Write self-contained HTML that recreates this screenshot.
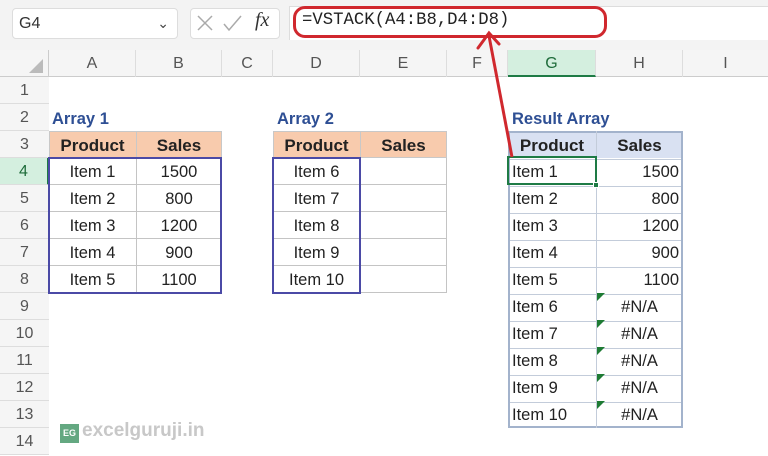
<!DOCTYPE html>
<html><head><meta charset="utf-8"><style>
*{margin:0;padding:0;box-sizing:border-box}
body{width:768px;height:452px;overflow:hidden;background:#fff;font-family:"Liberation Sans",Calibri,sans-serif;position:relative;color:#222}
.a{position:absolute}
.rh{position:absolute;left:0;width:49px;height:27px;line-height:28px;text-align:center;font-size:16px;color:#555;background:#f5f5f5;border-bottom:1px solid #ddd}
.ch{position:absolute;top:50px;height:27px;line-height:27px;text-align:center;font-size:16px;color:#555;border-right:1px solid #ddd}
.c{position:absolute;height:27px;line-height:29px;font-size:16.5px;text-align:center;color:#222}
.h{font-weight:bold;font-size:17px}
.t{position:absolute;font-weight:bold;color:#2e4f94;font-size:16.5px}
.tri{position:absolute;width:0;height:0;border-top:8px solid #1e7b34;border-right:8px solid transparent}
</style></head><body>
<div class="a" style="left:0;top:0;width:768px;height:50px;background:#f3f3f3"></div>
<div class="a" style="left:12px;top:8px;width:166px;height:31px;background:#fff;border:1px solid #ddd;border-radius:4px;font-size:16px;line-height:29px;padding-left:6px;color:#333">G4<span style="position:absolute;right:8px;top:0;font-size:14px;color:#444">&#8964;</span></div>
<div class="a" style="left:190px;top:8px;width:90px;height:31px;background:#fff;border:1px solid #ddd;border-radius:4px"></div>
<svg class="a" style="left:196px;top:14px" width="50" height="20"><path d="M2 2L16 16M16 2L2 16" stroke="#aaa" stroke-width="1.5"/><path d="M28 10l5 6 12-14" stroke="#aaa" stroke-width="1.5" fill="none"/></svg>
<div class="a" style="left:255px;top:9px;font-family:'Liberation Serif',serif;font-style:italic;font-size:20px;color:#333">fx</div>
<div class="a" style="left:289px;top:6px;width:479px;height:34px;background:#fff;border-top:1px solid #ddd;border-left:1px solid #ddd"></div>
<div class="a" style="left:293px;top:6px;width:314px;height:32px;border:3px solid #d0282e;border-radius:12px"></div>
<div class="a" style="left:302px;top:11px;font-family:'Liberation Mono',monospace;font-size:17.3px;color:#222">=VSTACK(A4:B8,D4:D8)</div>
<div class="a" style="left:0;top:50px;width:768px;height:27px;background:#f5f5f5;border-bottom:1px solid #ccc"></div>
<div class="a" style="left:0;top:50px;width:49px;height:27px;border-right:1px solid #ccc"></div>
<svg class="a" style="left:28px;top:58px" width="16" height="16"><path d="M15 1V15H1Z" fill="#bbb"/></svg>
<div class="ch" style="left:49px;width:87px">A</div>
<div class="ch" style="left:136px;width:86px">B</div>
<div class="ch" style="left:222px;width:51px">C</div>
<div class="ch" style="left:273px;width:87px">D</div>
<div class="ch" style="left:360px;width:87px">E</div>
<div class="ch" style="left:447px;width:61px">F</div>
<div class="ch" style="left:508px;width:88px;background:#d4efdf;color:#1e6b3a;border-bottom:2px solid #1e7b45;height:27px">G</div>
<div class="ch" style="left:596px;width:87px">H</div>
<div class="ch" style="left:683px;width:85px;border:none">I</div>
<div class="a" style="left:48px;top:77px;width:1px;height:375px;background:#ccc"></div>
<div class="rh" style="top:77px">1</div><div class="rh" style="top:104px">2</div><div class="rh" style="top:131px">3</div>
<div class="rh" style="top:158px;background:#d4efdf;color:#1e6b3a;border-right:2px solid #1e7b45">4</div>
<div class="rh" style="top:185px">5</div><div class="rh" style="top:212px">6</div><div class="rh" style="top:239px">7</div><div class="rh" style="top:266px">8</div><div class="rh" style="top:293px">9</div><div class="rh" style="top:320px">10</div><div class="rh" style="top:347px">11</div><div class="rh" style="top:374px">12</div><div class="rh" style="top:401px">13</div><div class="rh" style="top:428px">14</div>
<div class="t" style="left:52px;top:110px">Array 1</div>
<div class="t" style="left:277px;top:110px">Array 2</div>
<div class="t" style="left:512px;top:110px">Result Array</div>
<div class="a" style="left:49px;top:131px;width:173px;height:27px;background:#f8cbad;border:1px solid #c8c8c8"></div>
<div class="a" style="left:136px;top:131px;width:1px;height:27px;background:#c8c8c8"></div>
<div class="a" style="left:49px;top:158px;width:173px;height:135px;background:repeating-linear-gradient(to bottom,transparent 0,transparent 26px,#c4c4c4 26px,#c4c4c4 27px)"></div>
<div class="a" style="left:136px;top:158px;width:1px;height:135px;background:#c4c4c4"></div>
<div class="a" style="left:48px;top:157px;width:174px;height:137px;border:2px solid #4b4aa6"></div>
<div class="c h" style="left:49px;top:131px;width:87px">Product</div><div class="c h" style="left:136px;top:131px;width:86px">Sales</div>
<div class="c" style="left:49px;top:158px;width:87px">Item 1</div><div class="c" style="left:136px;top:158px;width:86px">1500</div>
<div class="c" style="left:49px;top:185px;width:87px">Item 2</div><div class="c" style="left:136px;top:185px;width:86px">800</div>
<div class="c" style="left:49px;top:212px;width:87px">Item 3</div><div class="c" style="left:136px;top:212px;width:86px">1200</div>
<div class="c" style="left:49px;top:239px;width:87px">Item 4</div><div class="c" style="left:136px;top:239px;width:86px">900</div>
<div class="c" style="left:49px;top:266px;width:87px">Item 5</div><div class="c" style="left:136px;top:266px;width:86px">1100</div>
<div class="a" style="left:273px;top:131px;width:174px;height:27px;background:#f8cbad;border:1px solid #c8c8c8"></div>
<div class="a" style="left:360px;top:131px;width:1px;height:27px;background:#c8c8c8"></div>
<div class="a" style="left:273px;top:158px;width:174px;height:135px;border-right:1px solid #c4c4c4;border-bottom:1px solid #c4c4c4;background:repeating-linear-gradient(to bottom,transparent 0,transparent 26px,#c4c4c4 26px,#c4c4c4 27px)"></div>
<div class="a" style="left:272px;top:157px;width:89px;height:137px;border:2px solid #4b4aa6"></div>
<div class="c h" style="left:273px;top:131px;width:87px">Product</div><div class="c h" style="left:360px;top:131px;width:87px">Sales</div>
<div class="c" style="left:273px;top:158px;width:87px">Item 6</div>
<div class="c" style="left:273px;top:185px;width:87px">Item 7</div>
<div class="c" style="left:273px;top:212px;width:87px">Item 8</div>
<div class="c" style="left:273px;top:239px;width:87px">Item 9</div>
<div class="c" style="left:273px;top:266px;width:87px">Item 10</div>
<div class="a" style="left:508px;top:131px;width:175px;height:27px;background:#d9e1f2"></div>
<div class="a" style="left:508px;top:131px;width:175px;height:297px;border:2px solid #a3b3cc;background:repeating-linear-gradient(to bottom,transparent 0,transparent 26px,#c3ccda 26px,#c3ccda 27px)"></div>
<div class="a" style="left:596px;top:131px;width:1px;height:297px;background:#c3ccda"></div>
<div class="a" style="left:507px;top:156px;width:90px;height:29px;border:2px solid #1e7b45"></div>
<div class="a" style="left:593px;top:182px;width:6px;height:6px;background:#1e7b45;border:1px solid #fff"></div>
<div class="c h" style="left:508px;top:131px;width:88px">Product</div><div class="c h" style="left:596px;top:131px;width:87px">Sales</div>
<div class="c" style="left:512px;top:158px;text-align:left">Item 1</div><div class="c" style="left:596px;top:158px;width:83px;text-align:right">1500</div>
<div class="c" style="left:512px;top:185px;text-align:left">Item 2</div><div class="c" style="left:596px;top:185px;width:83px;text-align:right">800</div>
<div class="c" style="left:512px;top:212px;text-align:left">Item 3</div><div class="c" style="left:596px;top:212px;width:83px;text-align:right">1200</div>
<div class="c" style="left:512px;top:239px;text-align:left">Item 4</div><div class="c" style="left:596px;top:239px;width:83px;text-align:right">900</div>
<div class="c" style="left:512px;top:266px;text-align:left">Item 5</div><div class="c" style="left:596px;top:266px;width:83px;text-align:right">1100</div>
<div class="c" style="left:512px;top:293px;text-align:left">Item 6</div><div class="c" style="left:596px;top:293px;width:87px">#N/A</div>
<div class="c" style="left:512px;top:320px;text-align:left">Item 7</div><div class="c" style="left:596px;top:320px;width:87px">#N/A</div>
<div class="c" style="left:512px;top:347px;text-align:left">Item 8</div><div class="c" style="left:596px;top:347px;width:87px">#N/A</div>
<div class="c" style="left:512px;top:374px;text-align:left">Item 9</div><div class="c" style="left:596px;top:374px;width:87px">#N/A</div>
<div class="c" style="left:512px;top:401px;text-align:left">Item 10</div><div class="c" style="left:596px;top:401px;width:87px">#N/A</div>
<div class="tri" style="left:597px;top:293px"></div><div class="tri" style="left:597px;top:320px"></div><div class="tri" style="left:597px;top:347px"></div><div class="tri" style="left:597px;top:374px"></div><div class="tri" style="left:597px;top:401px"></div>
<svg class="a" style="left:0;top:0" width="768" height="452"><path d="M512 157L489 36" stroke="#d0282e" stroke-width="3" fill="none"/><path d="M478 48L489 33L499 44" stroke="#d0282e" stroke-width="3" fill="none" stroke-linecap="round"/></svg>
<div class="a" style="left:60px;top:424px;width:19px;height:19px;background:#4a9a6c;opacity:.85;color:#fff;font-size:9px;line-height:19px;text-align:center;font-weight:bold">EG</div>
<div class="a" style="left:82px;top:420px;font-size:19px;font-weight:bold;color:#c8c8c8">excelguruji.in</div>
</body></html>
